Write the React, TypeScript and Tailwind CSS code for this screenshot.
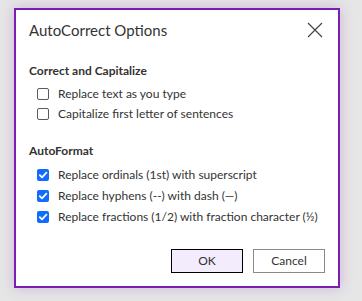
import React from 'react';

const font = { fontFamily: 'Lato, "Noto Sans", sans-serif' };

const Box: React.FC<{ checked: boolean }> = ({ checked }) =>
  checked ? (
    <span className="flex h-[12px] w-[12px] shrink-0 items-center justify-center rounded-[2px] bg-[#0f6cff]">
      <svg width="10" height="10" viewBox="0 0 10 10">
        <path d="M1.8 5.2 L4 7.4 L8.4 2.6" fill="none" stroke="#fff" strokeWidth="1.8" strokeLinecap="round" strokeLinejoin="round" />
      </svg>
    </span>
  ) : (
    <span className="h-[12px] w-[12px] shrink-0 rounded-[2px] border border-[#5a5a5a] bg-white" />
  );

const Row: React.FC<{ checked: boolean; label: string; h: string }> = ({ checked, label, h }) => (
  <div className={`flex items-center gap-[9px] pl-[8px] ${h}`}>
    <Box checked={checked} />
    <span className="whitespace-nowrap text-[12px] text-[#333]">{label}</span>
  </div>
);

export default function App() {
  return (
    <div className="h-[301px] w-[362px] bg-[#e6e6e6] pt-[8px] pl-[14px]" style={font}>
      <div className="flex h-[280px] w-[326px] flex-col border-2 border-[#7a1fb0] bg-white px-[13px] shadow-[0_0_12px_rgba(130,40,180,0.25)]">
        <div className="mt-[8px] flex h-[24px] items-center justify-between">
          <span className="text-[15px] text-[#333]">AutoCorrect Options</span>
          <svg width="16" height="16" viewBox="0 0 16 16" className="mr-[2px]">
            <path d="M1 1 L15 15 M15 1 L1 15" stroke="#444" strokeWidth="1.2" />
          </svg>
        </div>

        <div className="mt-[21px] text-[12px] font-bold leading-[16px] text-[#333]">Correct and Capitalize</div>
        <div className="mt-[5px]">
          <Row checked={false} label="Replace text as you type" h="h-[20px]" />
          <Row checked={false} label="Capitalize first letter of sentences" h="h-[20px]" />
        </div>

        <div className="mt-[19px] text-[12px] font-bold leading-[16px] text-[#333]">AutoFormat</div>
        <div className="mt-[5px]">
          <Row checked label="Replace ordinals (1st) with superscript" h="h-[21px]" />
          <Row checked label="Replace hyphens (--) with dash (—)" h="h-[21px]" />
          <Row checked label="Replace fractions (1/2) with fraction character (½)" h="h-[21px]" />
        </div>

        <div className="mt-[22px] flex justify-end gap-[10px]">
          <button className="h-[24px] w-[72px] border border-black bg-[#f3ecfd] text-[12px] text-[#333]">OK</button>
          <button className="h-[24px] w-[72px] border border-[#8a8a8a] bg-white text-[12px] text-[#333]">Cancel</button>
        </div>
      </div>
    </div>
  );
}
